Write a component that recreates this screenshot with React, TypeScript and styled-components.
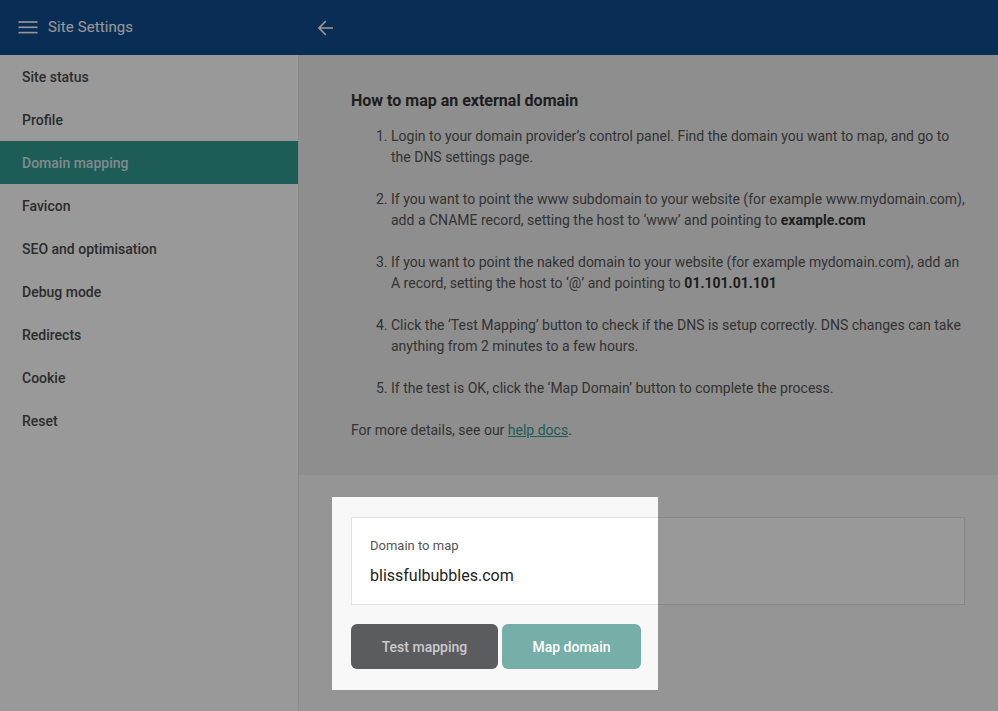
import React from 'react';
import styled, {createGlobalStyle} from 'styled-components';

const GlobalStyle = createGlobalStyle`
  html, body {
    margin: 0;
    padding: 0;
    height: 100%;
  }
  body {
    font-family: Roboto, "Liberation Sans", Arial, sans-serif;
    -webkit-font-smoothing: antialiased;
  }
  #root {
    height: 100%;
  }
`;

const Page = styled.div`
  height: 100vh;
  display: flex;
  flex-direction: column;
  overflow: hidden;
  position: relative;
`;

const Header = styled.header`
  height: 55px;
  flex-shrink: 0;
  display: flex;
  align-items: center;
  background-color: #124b8e;
  color: #fff;
`;

const HeaderBrand = styled.div`
  width: 298px;
  display: flex;
  align-items: center;
  gap: 8px;
  padding: 0 0 2px 16px;
  box-sizing: border-box;
  font-size: 15px;
  letter-spacing: 0.1px;
`;

const IconButton = styled.button`
  background: none;
  border: none;
  padding: 0;
  color: inherit;
  display: flex;
  align-items: center;
  cursor: pointer;
`;

const BackButton = styled(IconButton)`
  margin-left: 15px;
`;

const Body = styled.div`
  flex: 1;
  display: flex;
  min-height: 0;
`;

const Sidebar = styled.nav`
  width: 298px;
  flex-shrink: 0;
  background-color: #fff;
  border-right: 1px solid #e4e4e4;
`;

const NavItem = styled.a<{$active?: boolean}>`
  display: flex;
  align-items: center;
  height: 43px;
  padding-left: 22px;
  font-size: 14px;
  font-weight: 500;
  text-decoration: none;
  color: ${({$active}) => ($active ? 'rgba(255,255,255,0.8)' : '#4a4a4a')};
  background-color: ${({$active}) => ($active ? '#329993' : 'transparent')};
`;

const Main = styled.main`
  flex: 1;
  display: flex;
  flex-direction: column;
  min-width: 0;
`;

const Instructions = styled.section`
  background-color: #ededed;
  padding: 36px 33px 34px 52px;
  color: #555;
  font-size: 14px;
  line-height: 21px;
`;

const Heading = styled.h2`
  margin: 0 0 15px;
  font-size: 16px;
  line-height: 20px;
  font-weight: 700;
  color: #333;
`;

const Steps = styled.ol`
  margin: 0 0 21px;
  padding-left: 40px;
`;

const Step = styled.li`
  margin-bottom: 21px;
  &:last-child {
    margin-bottom: 0;
  }
  strong {
    color: #333;
  }
`;

const Note = styled.p`
  margin: 0;
`;

const HelpLink = styled.a`
  color: #329993;
  text-decoration: underline;
`;

const FormSection = styled.section`
  flex: 1;
  position: relative;
  background-color: #f8f8f8;
  padding: 42px 33px 0 52px;
`;

const InputCard = styled.div`
  background-color: #fff;
  border: 1px solid #e2e2e2;
  height: 88px;
  box-sizing: border-box;
  padding: 19px 18px 0;
  display: flex;
  flex-direction: column;
`;

const Label = styled.label`
  font-size: 13px;
  color: #555;
  line-height: 18px;
`;

const Input = styled.input`
  border: none;
  outline: none;
  padding: 0;
  margin-top: 11px;
  font-family: inherit;
  font-size: 16px;
  color: #222;
  background: transparent;
`;

const Actions = styled.div`
  display: flex;
  gap: 4px;
  margin-top: 19px;
`;

const Button = styled.button<{$variant: 'dark' | 'teal'}>`
  height: 45px;
  border: none;
  border-radius: 6px;
  font-family: inherit;
  font-size: 14px;
  font-weight: 500;
  cursor: pointer;
  width: ${({$variant}) => ($variant === 'dark' ? '147px' : '139px')};
  background-color: ${({$variant}) => ($variant === 'dark' ? '#5b5c60' : '#76afa8')};
  color: ${({$variant}) => ($variant === 'dark' ? '#cacaca' : '#fff')};
`;

const Spotlight = styled.div`
  position: absolute;
  left: 33px;
  top: 22px;
  width: 326px;
  height: 193px;
  box-shadow: 0 0 0 3000px rgba(0, 0, 0, 0.4);
  pointer-events: none;
  z-index: 10;
`;

const MenuIcon = () => (
  <svg width="24" height="24" viewBox="0 0 24 24" fill="currentColor">
    <rect x="2.5" y="6.2" width="19" height="1.6" />
    <rect x="2.5" y="11.5" width="19" height="1.6" />
    <rect x="2.5" y="16.8" width="19" height="1.6" />
  </svg>
);

const ArrowBackIcon = () => (
  <svg width="24" height="24" viewBox="0 0 24 24" fill="currentColor">
    <path d="M20 11.2H7.9l5.5-5.6L12.3 4.5 4.8 12l7.5 7.5 1.1-1.1-5.5-5.6H20z" />
  </svg>
);

const navItems = [
  'Site status',
  'Profile',
  'Domain mapping',
  'Favicon',
  'SEO and optimisation',
  'Debug mode',
  'Redirects',
  'Cookie',
  'Reset',
];

export default function App() {
  const [domain, setDomain] = React.useState('blissfulbubbles.com');

  return (
    <Page>
      <GlobalStyle />
      <Header>
        <HeaderBrand>
          <IconButton aria-label="Menu">
            <MenuIcon />
          </IconButton>
          Site Settings
        </HeaderBrand>
        <BackButton aria-label="Back">
          <ArrowBackIcon />
        </BackButton>
      </Header>

      <Body>
        <Sidebar>
          {navItems.map(item => (
            <NavItem key={item} href="#" $active={item === 'Domain mapping'}>
              {item}
            </NavItem>
          ))}
        </Sidebar>

        <Main>
          <Instructions>
            <Heading>How to map an external domain</Heading>
            <Steps>
              <Step>
                Login to your domain provider’s control panel. Find the domain you want to map, and go to
                the DNS settings page.
              </Step>
              <Step>
                If you want to point the www subdomain to your website (for example www.mydomain.com),
                add a CNAME record, setting the host to ‘www’ and pointing to <strong>example.com</strong>
              </Step>
              <Step>
                If you want to point the naked domain to your website (for example mydomain.com), add an
                A record, setting the host to ‘@’ and pointing to <strong>01.101.01.101</strong>
              </Step>
              <Step>
                Click the ‘Test Mapping’ button to check if the DNS is setup correctly. DNS changes can take
                anything from 2 minutes to a few hours.
              </Step>
              <Step>If the test is OK, click the ‘Map Domain’ button to complete the process.</Step>
            </Steps>
            <Note>
              For more details, see our <HelpLink href="#">help docs</HelpLink>.
            </Note>
          </Instructions>

          <FormSection>
            <InputCard>
              <Label htmlFor="domain">Domain to map</Label>
              <Input id="domain" value={domain} onChange={e => setDomain(e.target.value)} />
            </InputCard>
            <Actions>
              <Button $variant="dark">Test mapping</Button>
              <Button $variant="teal">Map domain</Button>
            </Actions>
            <Spotlight />
          </FormSection>
        </Main>
      </Body>
    </Page>
  );
}
